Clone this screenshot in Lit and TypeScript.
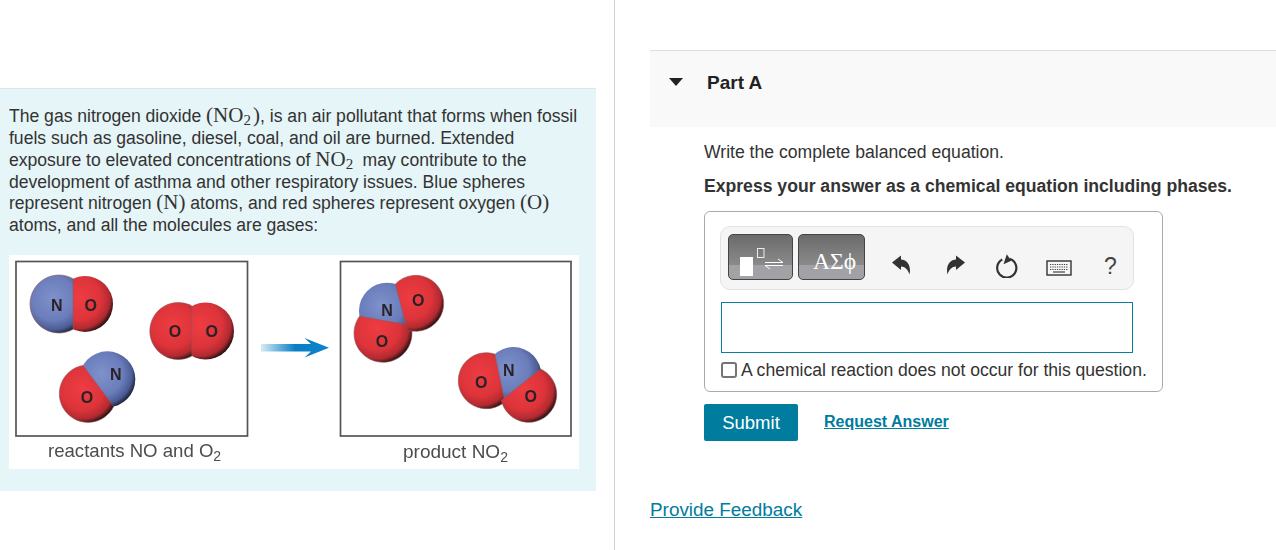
import { LitElement, html, css, svg } from "lit";
import { customElement } from "lit/decorators.js";

type Atom = { x: number; y: number; r: number; c: "b" | "r"; cut?: number };
type Mol = { atoms: Atom[]; labels: [string, number, number][] };

const mols: Mol[] = [
  { atoms: [{ x: 85, y: 304, r: 28, c: "r" }, { x: 59, y: 304, r: 29, c: "b", cut: 0 }],
    labels: [["N", 56.7, 305], ["O", 90.7, 305]] },
  { atoms: [{ x: 205.5, y: 331, r: 28.5, c: "r" }, { x: 178.3, y: 331, r: 28.5, c: "r", cut: 0 }],
    labels: [["O", 175, 331.7], ["O", 211.7, 331.7]] },
  { atoms: [{ x: 107.3, y: 379.3, r: 28, c: "b" }, { x: 88, y: 393.7, r: 28.7, c: "r", cut: 0 }],
    labels: [["N", 115.7, 374], ["O", 87, 397]] },
  { atoms: [{ x: 387, y: 310.7, r: 28, c: "b" }, { x: 383, y: 333.3, r: 29, c: "r", cut: 0 }, { x: 415.7, y: 303.3, r: 28, c: "r", cut: 0 }],
    labels: [["N", 387, 310], ["O", 418.3, 300], ["O", 382, 341.7]] },
  { atoms: [{ x: 513.3, y: 375, r: 28, c: "b" }, { x: 486.3, y: 380.7, r: 28, c: "r", cut: 0 }, { x: 528.7, y: 394.3, r: 28, c: "r", cut: 0 }],
    labels: [["N", 508.7, 370], ["O", 481.3, 382.3], ["O", 530.7, 396.7]] },
];

function cutPath(f: Atom, b: Atom): string {
  const dx = b.x - f.x, dy = b.y - f.y, d = Math.hypot(dx, dy);
  const a = (d * d + f.r * f.r - b.r * b.r) / (2 * d);
  const h = Math.sqrt(f.r * f.r - a * a);
  const ux = dx / d, uy = dy / d;
  const mx = f.x + a * ux, my = f.y + a * uy;
  const p1x = mx - uy * h, p1y = my + ux * h;
  const p2x = mx + uy * h, p2y = my - ux * h;
  return `M${p1x} ${p1y}A${f.r} ${f.r} 0 ${a >= 0 ? 1 : 0} 1 ${p2x} ${p2y}Z`;
}

const stops = {
  r: ["#ee3c42", "#dc343a", "#b02a30", "#120d0d"],
  b: ["#7f92cc", "#6a7cba", "#4c5c94", "#151a30"],
};

let gid = 0;
function atomSvg(a: Atom, base: Atom) {
  const id = `g${gid++}`;
  const s = stops[a.c];
  return svg`
    <radialGradient id=${id} gradientUnits="userSpaceOnUse" cx=${a.x - a.r * 0.2} cy=${a.y - a.r * 0.2} r=${a.r * 1.29}>
      <stop offset="0" stop-color=${s[0]}></stop>
      <stop offset="0.6" stop-color=${s[1]}></stop>
      <stop offset="0.84" stop-color=${s[2]}></stop>
      <stop offset="1" stop-color=${s[3]}></stop>
    </radialGradient>
    ${a.cut === undefined
      ? svg`<circle cx=${a.x} cy=${a.y} r=${a.r} fill="url(#${id})"></circle>`
      : svg`<path d=${cutPath(a, base)} fill="url(#${id})" stroke="#8d5a5e" stroke-width="0.6"></path>`}
  `;
}

@customElement("app-root")
export class AppRoot extends LitElement {
  static styles = css`
    :host { display: block; width: 1276px; height: 550px; overflow: hidden; background: #fff;
      font-family: "Liberation Sans", Arial, sans-serif; color: #333; }
    .page { display: flex; height: 550px; }
    .left { width: 614px; border-right: 1px solid #c8d3da; padding-top: 88px; flex: none; box-sizing: content-box; }
    .panel { width: 596px; height: 403px; box-sizing: border-box; background: #e6f5f7; border-top: 1px solid #dfe5e6;
      padding: 17.2px 0 0 9px; }
    .para { font-size: 17.6px; line-height: 21.8px; letter-spacing: -0.02px; white-space: nowrap; height: 148.8px; }
    .m { font-family: "Liberation Serif", serif; font-size: 21px; line-height: 0; letter-spacing: 0; }
    .m sub { font-size: 15px; line-height: 0; vertical-align: -3px; }
    .close { margin-left: 2.2px; }
    .after { margin-right: 4.5px; }
    .figure { display: block; width: 570px; height: 214px; background: #fff; }
    .figure svg { display: block; }
    .img { filter: blur(0.35px); }
    .cap { font-size: 18.6px; fill: #4d4d4d; font-family: "Liberation Sans", Arial, sans-serif; }
    .cap2 { font-size: 19px; }
    .atom-label { font-size: 16px; font-weight: 700; fill: #2a2226; text-anchor: middle; dominant-baseline: central;
      font-family: "Liberation Sans", Arial, sans-serif; }
    .right { flex: 1; margin-left: 35px; padding-top: 50px; min-width: 0; }
    .head { height: 77px; box-sizing: border-box; border-top: 1px solid #e0e0e0; background: #f9f9f9;
      display: flex; align-items: flex-start; padding: 21px 0 0 19px; }
    .tri { width: 0; height: 0; border-left: 7px solid transparent; border-right: 7px solid transparent;
      border-top: 8px solid #222; margin-top: 6px; }
    .part { font-size: 19px; font-weight: 700; color: #222; margin-left: 24px; line-height: 22px; }
    .content { padding-left: 54px; }
    .p1 { font-size: 17.6px; line-height: 22px; margin-top: 14px; }
    .p2 { font-size: 17.6px; line-height: 22px; font-weight: 700; margin-top: 12px; }
    .box { width: 459px; height: 181px; box-sizing: border-box; border: 1px solid #aaa; border-radius: 6px;
      margin-top: 14px; padding: 14px 0 0 15px; }
    .tools { width: 414px; height: 64px; box-sizing: border-box; border: 1px solid #e2e2e2; border-radius: 10px;
      background: #f5f5f5; display: flex; align-items: flex-start; padding: 7px 0 0 7px; }
    .btn { height: 46px; box-sizing: border-box; border: 1px solid #444; border-radius: 5px; flex: none;
      background: linear-gradient(#6b6b6b 0, #8a8a8a 68%, #a2a2a6 68%, #a2a2a6 100%); display: block; padding: 0; }
    .b1 { width: 65px; }
    .b1 svg { display: block; }
    .b2 { width: 67px; margin-left: 5px; padding-left: 6px; color: #fff; font-family: "Liberation Serif", serif; font-size: 23.5px; line-height: 52px; text-align: center; overflow: hidden; }
    .ic { flex: none; display: block; margin-top: 21px; }
    .undo { margin-left: 26px; }
    .redo { margin-left: 35px; }
    .reset { margin-left: 29px; margin-top: 20px; }
    .kb { margin-left: 27px; margin-top: 26px; }
    .q { margin-left: 32px; font-size: 23px; line-height: 64px; color: #444; }
    .answer { width: 412px; height: 51px; box-sizing: border-box; border: 1px solid #087ea4; margin: 12px 0 0 1px; background: #fff; }
    .check { display: flex; align-items: center; margin: 6px 0 0 1px; height: 22px; font-size: 17.6px; letter-spacing: -0.02px; }
    .check input { appearance: none; -webkit-appearance: none; margin: 0 4px 0 0; width: 16px; height: 16px; box-sizing: border-box;
      border: 2px solid #757575; border-radius: 3px; background: #fff; }
    .actions { display: flex; align-items: center; margin-top: 12px; height: 37px; }
    .submit { width: 94px; height: 37px; background: #007c9e; color: #fff; border: 0; border-radius: 2px; font: 18.5px "Liberation Sans", Arial, sans-serif; padding: 0; }
    .req { margin: -2px 0 0 26px; font-size: 16px; font-weight: 700; color: #007c9e; text-decoration: underline; }
    .fb { display: inline-block; margin-top: 58px; font-size: 18.9px; line-height: 22px; color: #007c9e; text-decoration: underline; }
  `;

  render() {
    gid = 0;
    return html`<div class="page">
      <div class="left">
        <div class="panel">
          <div class="para">
            The gas nitrogen dioxide <span class="m">(NO<sub>2</sub><span class="close">)</span></span>, is an air pollutant that forms when fossil<br />
            fuels such as gasoline, diesel, coal, and oil are burned. Extended<br />
            exposure to elevated concentrations of <span class="m after">NO<sub>2</sub></span> may contribute to the<br />
            development of asthma and other respiratory issues. Blue spheres<br />
            represent nitrogen <span class="m">(N)</span> atoms, and red spheres represent oxygen <span class="m">(O)</span><br />
            atoms, and all the molecules are gases:
          </div>
          <div class="figure">${this.figure()}</div>
        </div>
      </div>
      <div class="right">
        <div class="head"><span class="tri"></span><span class="part">Part A</span></div>
        <div class="content">
          <div class="p1">Write the complete balanced equation.</div>
          <div class="p2">Express your answer as a chemical equation including phases.</div>
          <div class="box">
            <div class="tools">
              <div class="btn b1">
                <svg width="63" height="44" viewBox="0 0 63 44">
                  <rect x="11" y="22" width="13" height="19" fill="#fff"></rect>
                  <rect x="28.5" y="13.5" width="6.5" height="9" fill="none" stroke="#eee" stroke-width="1"></rect>
                  <path d="M36 27.5H54L49 24M54 30.5H36L41 34" fill="none" stroke="#fff" stroke-width="1"></path>
                </svg>
              </div>
              <div class="btn b2">ΑΣϕ</div>
              <svg class="ic undo" width="20" height="20" viewBox="0 0 20 20"><path d="M1 7.5L10 .5V4.5C16 4.5 20.5 10.5 18.5 19.5C17 14.5 14 11.5 10 11.5V15Z" fill="#333"></path></svg>
              <svg class="ic redo" width="20" height="20" viewBox="0 0 20 20"><path d="M19 7.5L10 .5V4.5C4 4.5 -.5 10.5 1.5 19.5C3 14.5 6 11.5 10 11.5V15Z" fill="#333"></path></svg>
              <svg class="ic reset" width="24" height="24" viewBox="0 0 24 24">
                <path d="M14.5 4.8A9.6 9.6 0 1 1 7.3 5.5" fill="none" stroke="#333" stroke-width="2.2"></path>
                <path d="M11.8 .2L16.2 6.8L8.5 10.2Z" fill="#333"></path>
              </svg>
              <svg class="kb" width="26" height="16" viewBox="0 0 26 16">
                <rect x="1" y="1" width="24" height="14" fill="#f7f7f7" stroke="#333" stroke-width="1.4"></rect>
                <path d="M4 4.5H22M4 7H22M4 9.5H22" stroke="#444" stroke-width="1.2" stroke-dasharray="1.3 1" fill="none"></path>
                <path d="M7 12H19" stroke="#444" stroke-width="1.2" fill="none"></path>
              </svg>
              <span class="q">?</span>
            </div>
            <div class="answer"></div>
            <label class="check"><input type="checkbox" />A chemical reaction does not occur for this question.</label>
          </div>
          <div class="actions">
            <button class="submit">Submit</button>
            <a class="req">Request Answer</a>
          </div>
        </div>
        <a class="fb">Provide Feedback</a>
      </div>
    </div>`;
  }

  figure() {
    return html`<svg width="570" height="214" viewBox="9 255 570 214">
      <defs>
        <linearGradient id="shaft" x1="0" x2="1" y1="0" y2="0">
          <stop offset="0" stop-color="#d5ecf6"></stop>
          <stop offset="0.5" stop-color="#0a7fc4"></stop>
          <stop offset="1" stop-color="#0a84cc"></stop>
        </linearGradient>
      </defs>
      <g class="img">
        <rect x="16" y="261.5" width="231.5" height="174.5" fill="#fff" stroke="#555" stroke-width="1.7"></rect>
        <rect x="340.5" y="261.5" width="230.5" height="174.5" fill="#fff" stroke="#555" stroke-width="1.7"></rect>
        <path d="M261 344H311L304.5 338L329 347.7L304.5 357.5L311 351.5H261Z" fill="url(#shaft)"></path>
        ${mols.map((m) => svg`
          ${m.atoms.map((a) => atomSvg(a, m.atoms[0]))}
          ${m.labels.map((l) => svg`<text class="atom-label" x=${l[1]} y=${l[2]}>${l[0]}</text>`)}
        `)}
        <text class="cap" x="48" y="457">reactants NO and O<tspan font-size="14" dy="4">2</tspan></text>
        <text class="cap cap2" x="403" y="458">product NO<tspan font-size="14" dy="4">2</tspan></text>
      </g>
    </svg>`;
  }
}
